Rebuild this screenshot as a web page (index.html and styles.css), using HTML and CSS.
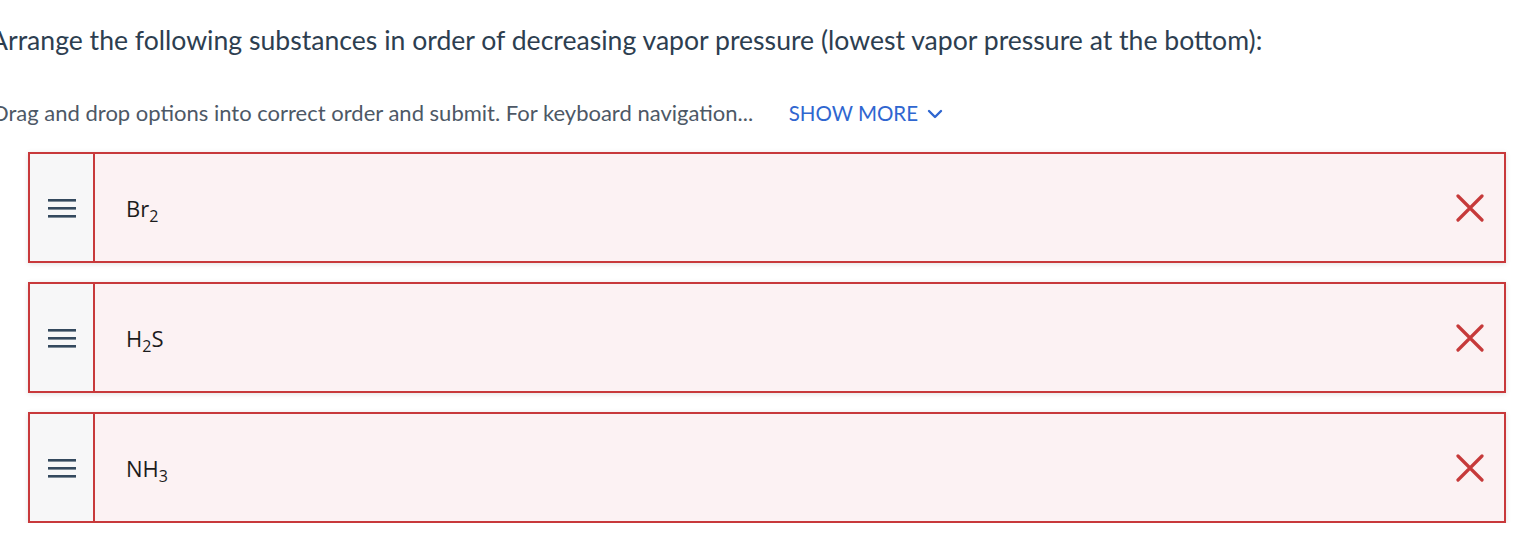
FILE: index.html
```html
<!DOCTYPE html>
<html>
<head>
<meta charset="utf-8">
<link rel="stylesheet" href="styles.css">
</head>
<body>
<div class="page">
  <h1 class="question">Arrange the following substances in order of decreasing vapor pressure (lowest vapor pressure at the bottom):</h1>
  <p class="instructions">Drag and drop options into correct order and submit. For keyboard navigation... <span class="show-more">SHOW MORE <svg class="chev" width="16" height="10" viewBox="0 0 16 10"><path d="M2 2 L8 8 L14 2" fill="none" stroke="#2f66d0" stroke-width="2.4" stroke-linecap="round" stroke-linejoin="round"/></svg></span></p>
  <ul class="list">
    <li class="item">
      <div class="handle"><svg width="28" height="20" viewBox="0 0 28 20"><rect x="0" y="1" width="28" height="2.6" fill="#34495e"/><rect x="0" y="9" width="28" height="2.6" fill="#34495e"/><rect x="0" y="17" width="28" height="2.6" fill="#34495e"/></svg></div>
      <div class="label"><span>Br<sub>2</sub></span></div>
      <div class="mark"><svg width="28" height="28" viewBox="0 0 28 28"><path d="M2 2 L26 26 M26 2 L2 26" stroke="#c63a3a" stroke-width="3.2" stroke-linecap="round"/></svg></div>
    </li>
    <li class="item">
      <div class="handle"><svg width="28" height="20" viewBox="0 0 28 20"><rect x="0" y="1" width="28" height="2.6" fill="#34495e"/><rect x="0" y="9" width="28" height="2.6" fill="#34495e"/><rect x="0" y="17" width="28" height="2.6" fill="#34495e"/></svg></div>
      <div class="label"><span>H<sub>2</sub>S</span></div>
      <div class="mark"><svg width="28" height="28" viewBox="0 0 28 28"><path d="M2 2 L26 26 M26 2 L2 26" stroke="#c63a3a" stroke-width="3.2" stroke-linecap="round"/></svg></div>
    </li>
    <li class="item">
      <div class="handle"><svg width="28" height="20" viewBox="0 0 28 20"><rect x="0" y="1" width="28" height="2.6" fill="#34495e"/><rect x="0" y="9" width="28" height="2.6" fill="#34495e"/><rect x="0" y="17" width="28" height="2.6" fill="#34495e"/></svg></div>
      <div class="label"><span>NH<sub>3</sub></span></div>
      <div class="mark"><svg width="28" height="28" viewBox="0 0 28 28"><path d="M2 2 L26 26 M26 2 L2 26" stroke="#c63a3a" stroke-width="3.2" stroke-linecap="round"/></svg></div>
    </li>
  </ul>
</div>
</body>
</html>
```

FILE: styles.css
```css
html, body {
  margin: 0;
  padding: 0;
  background: #ffffff;
}
body {
  font-family: Lato, "Open Sans", sans-serif;
  overflow: hidden;
}
.page {
  padding: 0 8px 0 28px;
}
.question {
  margin: 22px 0 0 -38px;
  font-size: 26.6px;
  font-weight: 400;
  color: #2d3e50;
  line-height: 36px;
  white-space: nowrap;
}
.instructions {
  margin: 41px 0 0 -36px;
  font-size: 22px;
  line-height: 28px;
  color: #4d5866;
  white-space: nowrap;
}
.show-more {
  color: #2f66d0;
  margin-left: 30px;
  font-size: 20.5px;
}
.chev {
  margin-left: 4px;
  vertical-align: 2px;
}
.list {
  list-style: none;
  margin: 25px 0 0 0;
  padding: 0;
  display: flex;
  flex-direction: column;
  gap: 19px;
}
.item {
  display: flex;
  align-items: stretch;
  height: 111px;
  box-sizing: border-box;
  border: 2px solid #c8393b;
  background: #fcf2f3;
  box-shadow: 0 1px 5px rgba(0, 0, 0, 0.12);
}
.handle {
  width: 63px;
  flex: none;
  background: #f7f7f8;
  border-right: 2px solid #c8393b;
  display: flex;
  align-items: center;
  justify-content: center;
}
.label {
  flex: 1;
  display: flex;
  align-items: center;
  padding-left: 31px;
  font-size: 22px;
  color: #1c1c1c;
  font-family: "Open Sans", Lato, sans-serif;
}
.label sub {
  font-size: 16px;
  vertical-align: -5px;
  line-height: 0;
}
.mark {
  width: 68px;
  flex: none;
  display: flex;
  align-items: center;
  justify-content: center;
}
```
